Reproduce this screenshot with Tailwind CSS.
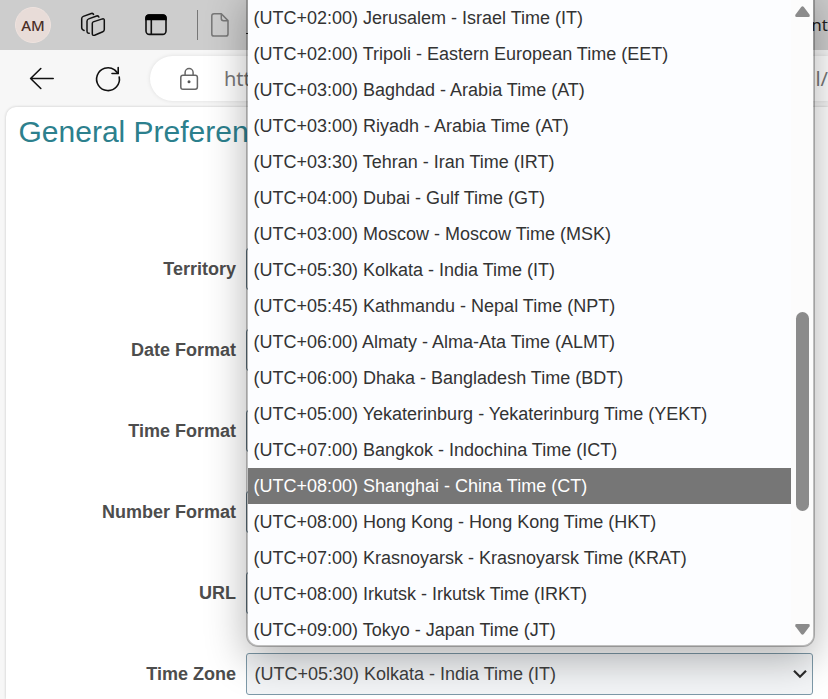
<!DOCTYPE html>
<html lang="en">
<head>
    <meta charset="UTF-8">
    <meta name="viewport" content="width=device-width, initial-scale=1.0">
    <script src="https://cdn.jsdelivr.net/npm/@tailwindcss/browser@4"></script>
    <title>General Preferences</title>
</head>
<body class="relative h-[699px] overflow-hidden bg-[#f7f7f7] font-['Liberation_Sans',Arial,sans-serif]">
    <!-- Tab strip -->
    <div class="flex h-[50px] items-center bg-[#cdcdcd] pl-[15px] font-['Noto_Sans',sans-serif]">
        <div class="flex size-9 items-center justify-center rounded-full border border-[#efe3df] bg-[#e8dcd8] text-[15px] font-medium text-[#4a2f27]">AM</div>
        <svg class="ml-[29px]" width="26" height="26" viewBox="0 0 26 26" fill="none" stroke="#111" stroke-width="1.5" stroke-linejoin="round" stroke-linecap="round">
            <path d="M13.2 9.9 22.4 6.9Q24.3 6.4 24.3 8.3V17.6Q24.3 19.2 22.8 19.8L14.6 23.2Q12.3 23.9 12.3 21.8V11.6Q12.3 10.3 13.2 9.9Z"/>
            <path d="M9.2 21.3Q7 21.4 7 19V9.2Q7 7.5 8.7 6.9L16.6 4Q18.4 3.5 18.9 5.1"/>
            <path d="M4.1 18.4Q1.7 17.8 1.7 15.5V6.7Q1.7 5 3.3 4.4L11.3 1.5Q13 1 13.6 2.4"/>
        </svg>
        <svg class="ml-[38px]" width="24" height="24" viewBox="0 0 24 24" fill="none" stroke="#111" stroke-width="1.6">
            <rect x="2" y="2" width="20" height="19.4" rx="3.4"/>
            <path d="M7.3 7v14.4"/>
            <path d="M1.2 7.2V5Q1.2 1.2 5 1.2H19Q22.8 1.2 22.8 5V7.2Z" fill="#000" stroke="none"/>
        </svg>
        <div class="ml-[29px] h-[30px] w-px bg-[#777]"></div>
        <svg class="ml-[12px]" width="20" height="26" viewBox="0 0 20 26" fill="none" stroke="#777" stroke-width="1.5" stroke-linejoin="round">
            <path d="M11.3 1.8H4Q1.8 1.8 1.8 4V21.9Q1.8 24.1 4 24.1H15.8Q18 24.1 18 21.9V8.6Z"/>
            <path d="M11.3 1.8V6.6Q11.3 8.8 13.5 8.8H18"/>
        </svg>
        <div class="mt-4 ml-4 h-px w-4 bg-[#222]"></div>
        <span class="ml-auto text-[17px] text-[#222]">nt</span>
    </div>

    <!-- Address bar -->
    <div class="flex h-[57px] items-center pl-7">
        <svg width="28" height="24" viewBox="0 0 28 24" fill="none" stroke="#111" stroke-width="1.6" stroke-linecap="round" stroke-linejoin="round">
            <path d="M25.2 11.5H2.6M12.8 1.5 2.6 11.5l10.2 10"/>
        </svg>
        <svg class="ml-[38px]" width="28" height="28" viewBox="0 0 28 28" fill="none" stroke="#111" stroke-width="1.6" stroke-linecap="round" stroke-linejoin="round">
            <path d="M25.2 12A11.4 11.4 0 1 1 20.6 4.9L24.1 8.4"/>
            <path d="M24.2 2.5V8.5H18"/>
        </svg>
        <div class="ml-[28px] flex h-[45px] flex-1 items-center rounded-l-full bg-white pl-[29px] shadow-[0_0_4px_#0000001a]">
            <svg width="20" height="24" viewBox="0 0 20 24" fill="none" stroke="#666" stroke-width="1.5">
                <rect x="1.8" y="8.3" width="16.6" height="14" rx="2.2"/>
                <path d="M6.1 8.3V5.5A4 4 0 0 1 14.1 5.5V8.3"/>
                <circle cx="10" cy="14.7" r="1.5" fill="#555" stroke="none"/>
            </svg>
            <span class="ml-[25px] font-['Noto_Sans',sans-serif] text-[20px] text-[#777]">htt</span>
            <span class="ml-auto font-['Noto_Sans',sans-serif] text-[20px] text-[#777]">l/</span>
        </div>
    </div>

    <!-- Page -->
    <div class="ml-1.5 h-[592px] rounded-tl-[10px] bg-white pl-3 shadow-[0_0_3px_#00000033]">
        <h1 class="w-[229px] overflow-hidden pt-[5px] pl-[0.5px] text-[30px] leading-[40px] whitespace-nowrap text-[#2c808d]">General Preferences</h1>
        <div class="mt-[96px] flex flex-col gap-[39px] text-[18px] font-bold text-[#4d4d4d]">
            <div class="flex h-[42px] items-center"><label class="w-[218px] text-right">Territory</label><div class="ml-2.5 h-[42px] w-[567px] rounded-[3px] border border-[#6d8694] bg-[#eee]"></div></div>
            <div class="flex h-[42px] items-center"><label class="w-[218px] text-right">Date Format</label><div class="ml-2.5 h-[42px] w-[567px] rounded-[3px] border border-[#6d8694] bg-[#eee]"></div></div>
            <div class="flex h-[42px] items-center"><label class="w-[218px] text-right">Time Format</label><div class="ml-2.5 h-[42px] w-[567px] rounded-[3px] border border-[#6d8694] bg-[#eee]"></div></div>
            <div class="flex h-[42px] items-center"><label class="w-[218px] text-right">Number Format</label><div class="ml-2.5 h-[42px] w-[567px] rounded-[3px] border border-[#6d8694] bg-[#eee]"></div></div>
            <div class="flex h-[42px] items-center"><label class="w-[218px] text-right">URL</label><div class="ml-2.5 h-[42px] w-[567px] rounded-[3px] border border-[#6d8694] bg-[#eee]"></div></div>
            <div class="flex h-[42px] items-center">
                <label class="w-[218px] text-right">Time Zone</label>
                <div class="ml-2.5 flex h-[42px] w-[567px] items-center justify-between rounded-[3px] border border-[#7d99a8] bg-[#f3f5f7] pr-[5px] pl-[7.5px] text-[18px] font-normal text-[#404040]">
                    <span>(UTC+05:30) Kolkata - India Time (IT)</span>
                    <svg width="14" height="10" viewBox="0 0 14 10" fill="none" stroke="#2b2b2b" stroke-width="2.2"><path d="M1 1.8l6 6 6-6"/></svg>
                </div>
            </div>
        </div>
    </div>

    <!-- Time zone dropdown -->
    <div class="absolute -top-3 left-[246px] h-[659px] w-[569px] overflow-hidden rounded-xl border-2 border-black/25 bg-[#fcfdff] bg-clip-padding shadow-[0_12px_40px_#0000004d]">
        <ul class="mt-2.5 w-[543px] text-[18px] leading-[36px] whitespace-nowrap text-[#333] *:pl-[5.5px]">
            <li>(UTC+02:00) Jerusalem - Israel Time (IT)</li>
            <li>(UTC+02:00) Tripoli - Eastern European Time (EET)</li>
            <li>(UTC+03:00) Baghdad - Arabia Time (AT)</li>
            <li>(UTC+03:00) Riyadh - Arabia Time (AT)</li>
            <li>(UTC+03:30) Tehran - Iran Time (IRT)</li>
            <li>(UTC+04:00) Dubai - Gulf Time (GT)</li>
            <li>(UTC+03:00) Moscow - Moscow Time (MSK)</li>
            <li>(UTC+05:30) Kolkata - India Time (IT)</li>
            <li>(UTC+05:45) Kathmandu - Nepal Time (NPT)</li>
            <li>(UTC+06:00) Almaty - Alma-Ata Time (ALMT)</li>
            <li>(UTC+06:00) Dhaka - Bangladesh Time (BDT)</li>
            <li>(UTC+05:00) Yekaterinburg - Yekaterinburg Time (YEKT)</li>
            <li>(UTC+07:00) Bangkok - Indochina Time (ICT)</li>
            <li class="bg-[#767676] text-white">(UTC+08:00) Shanghai - China Time (CT)</li>
            <li>(UTC+08:00) Hong Kong - Hong Kong Time (HKT)</li>
            <li>(UTC+07:00) Krasnoyarsk - Krasnoyarsk Time (KRAT)</li>
            <li>(UTC+08:00) Irkutsk - Irkutsk Time (IRKT)</li>
            <li>(UTC+09:00) Tokyo - Japan Time (JT)</li>
        </ul>
        <!-- Scrollbar -->
        <div class="absolute inset-y-0 right-0 flex w-[22px] flex-col items-center bg-[#fcfcfc] pt-[16px]">
            <svg width="15" height="11" viewBox="0 0 15 11" fill="#8b8b8b"><path d="M6.2 1Q7.5-.5 8.8 1L14.6 8.8Q15.2 11 13.4 11H1.6Q-.2 11 .4 8.8Z"/></svg>
            <div class="mt-[295px] h-[199px] w-[13px] rounded-full bg-[#8b8b8b]"></div>
            <svg class="mt-[113px]" width="15" height="11" viewBox="0 0 15 11" fill="#8b8b8b"><path d="M6.2 10Q7.5 11.5 8.8 10L14.6 2.2Q15.2 0 13.4 0H1.6Q-.2 0 .4 2.2Z"/></svg>
        </div>
    </div>
</body>
</html>
